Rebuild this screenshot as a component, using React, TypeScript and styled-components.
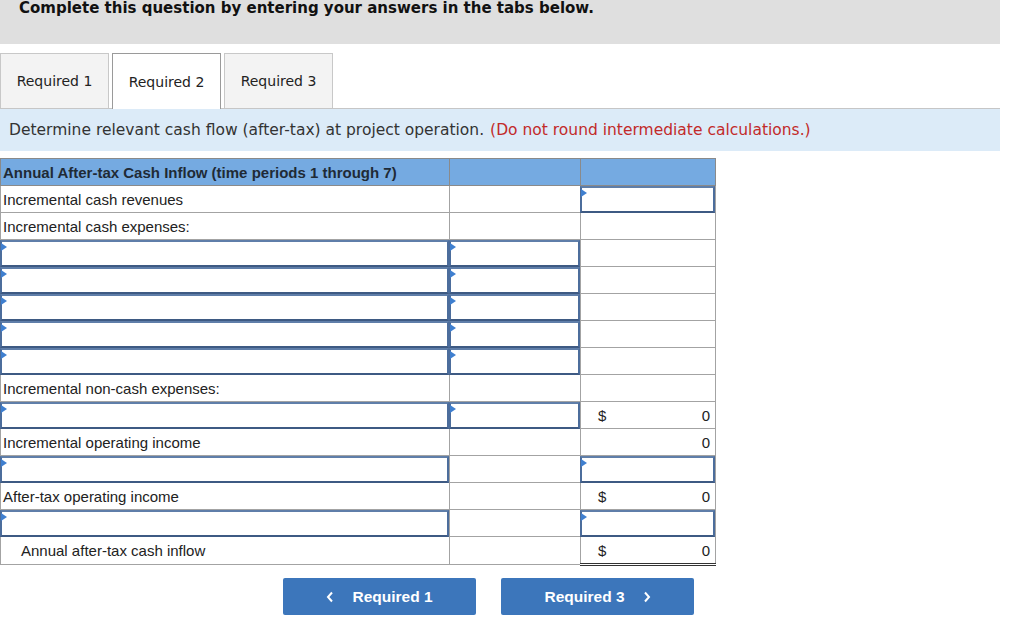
import React from "react";
import styled, { createGlobalStyle } from "styled-components";

const GlobalStyle = createGlobalStyle`
  body {
    margin: 0;
    background: #fff;
    font-family: "Liberation Sans", Arial, sans-serif;
  }
`;

const Page = styled.div`
  width: 1000px;
`;

const Banner = styled.div`
  height: 44px;
  background: #dfdfdf;
  padding: 0 0 0 19px;
  box-sizing: border-box;
  font-family: "DejaVu Sans", Verdana, sans-serif;
  font-weight: bold;
  font-size: 15px;
  line-height: 16px;
  color: #111;
`;

const TabBar = styled.div`
  display: flex;
  gap: 3px;
  margin-top: 9px;
  border-bottom: 1px solid #c6c6c6;
`;

const Tab = styled.div<{ $active?: boolean }>`
  width: 109px;
  box-sizing: border-box;
  display: flex;
  align-items: center;
  justify-content: center;
  background: ${(p) => (p.$active ? "#fff" : "#f3f3f3")};
  border: 1px solid ${(p) => (p.$active ? "#9a9a9a" : "#c8c8c8")};
  border-bottom: none;
  margin-bottom: ${(p) => (p.$active ? "-1px" : "0")};
  height: ${(p) => (p.$active ? "56px" : "55px")};
  font-family: "DejaVu Sans", Verdana, sans-serif;
  font-size: 14px;
  color: #222;
`;

const Instruction = styled.div`
  height: 42px;
  background: #dcebf8;
  display: flex;
  align-items: center;
  padding-left: 9px;
  font-family: "DejaVu Sans", Verdana, sans-serif;
  font-size: 15.5px;
  color: #333;
`;

const Red = styled.span`
  color: #c22a2a;
  margin-left: 6px;
`;

const Table = styled.table`
  margin-top: 7px;
  width: 715px;
  border-collapse: collapse;
  table-layout: fixed;
  font-size: 15px;
  color: #222;
`;

const HeadCell = styled.th`
  background: #75aae1;
  border: 1px solid #8a8a8a;
  height: 26px;
  padding: 0 2px;
  text-align: left;
  font-weight: bold;
  color: #1f2a36;
  white-space: nowrap;
`;

const Cell = styled.td<{ $indent?: boolean; $total?: boolean }>`
  border: 1px solid #a3a3a3;
  height: 26px;
  padding: 0 0 0 ${(p) => (p.$indent ? "20px" : "2px")};
  vertical-align: middle;
  white-space: nowrap;
  ${(p) => (p.$total ? "border-bottom: 3px double #333;" : "")}
`;

const InputCell = styled.td`
  border: 1px solid #a3a3a3;
  height: 26px;
  padding: 0;
`;

const InputBox = styled.div`
  position: relative;
  height: 27px;
  box-sizing: border-box;
  border: 2px solid #4c6d9c;
  border-top-color: #5f7ea9;
  border-bottom-color: #3e5a83;
  margin: -1px 0 -1px -1px;
  background: #fff;
  &::before {
    content: "";
    position: absolute;
    left: -1px;
    top: 1px;
    border-top: 4px solid transparent;
    border-bottom: 4px solid transparent;
    border-left: 6px solid #3f7fcf;
  }
`;

const Amount = styled.div`
  display: flex;
  justify-content: space-between;
  padding: 0 5px 0 15px;
`;

const Nav = styled.div`
  display: flex;
  gap: 25px;
  padding-left: 283px;
  margin-top: 12px;
`;

const NavButton = styled.button`
  width: 193px;
  height: 37px;
  border: none;
  border-radius: 2px;
  background: #3c76bb;
  color: #fff;
  font-family: "Liberation Sans", Arial, sans-serif;
  font-weight: bold;
  font-size: 15.5px;
  display: flex;
  align-items: center;
  justify-content: center;
  gap: 18px;
`;

const Chevron = ({ dir }: { dir: "left" | "right" }) => (
  <svg width="8" height="12" viewBox="0 0 8 12">
    <path
      d={dir === "left" ? "M6 1.5 L2 6 L6 10.5" : "M2 1.5 L6 6 L2 10.5"}
      fill="none"
      stroke="#fff"
      strokeWidth="2"
    />
  </svg>
);

type Row = {
  label?: string;
  indent?: boolean;
  c1?: boolean;
  c2?: boolean;
  c3?: boolean;
  value?: string;
  dollar?: boolean;
  total?: boolean;
};

const rows: Row[] = [
  { label: "Incremental cash revenues", c3: true },
  { label: "Incremental cash expenses:" },
  { c1: true, c2: true },
  { c1: true, c2: true },
  { c1: true, c2: true },
  { c1: true, c2: true },
  { c1: true, c2: true },
  { label: "Incremental non-cash expenses:" },
  { c1: true, c2: true, value: "0", dollar: true },
  { label: "Incremental operating income", value: "0" },
  { c1: true, c3: true },
  { label: "After-tax operating income", value: "0", dollar: true },
  { c1: true, c3: true },
  { label: "Annual after-tax cash inflow", indent: true, value: "0", dollar: true, total: true },
];

const App: React.FC = () => {
  return (
    <Page>
      <GlobalStyle />
      <Banner>Complete this question by entering your answers in the tabs below.</Banner>
      <TabBar>
        <Tab>Required 1</Tab>
        <Tab $active>Required 2</Tab>
        <Tab>Required 3</Tab>
      </TabBar>
      <Instruction>
        Determine relevant cash flow (after-tax) at project operation.
        <Red>(Do not round intermediate calculations.)</Red>
      </Instruction>
      <Table>
        <colgroup>
          <col style={{ width: 449 }} />
          <col style={{ width: 131 }} />
          <col style={{ width: 135 }} />
        </colgroup>
        <thead>
          <tr>
            <HeadCell>Annual After-tax Cash Inflow (time periods 1 through 7)</HeadCell>
            <HeadCell />
            <HeadCell />
          </tr>
        </thead>
        <tbody>
          {rows.map((r, i) => (
            <tr key={i}>
              {r.c1 ? (
                <InputCell>
                  <InputBox />
                </InputCell>
              ) : (
                <Cell $indent={r.indent}>{r.label}</Cell>
              )}
              {r.c2 ? (
                <InputCell>
                  <InputBox />
                </InputCell>
              ) : (
                <Cell />
              )}
              {r.c3 ? (
                <InputCell>
                  <InputBox />
                </InputCell>
              ) : (
                <Cell $total={r.total}>
                  {r.value && (
                    <Amount>
                      <span>{r.dollar ? "$" : ""}</span>
                      <span>{r.value}</span>
                    </Amount>
                  )}
                </Cell>
              )}
            </tr>
          ))}
        </tbody>
      </Table>
      <Nav>
        <NavButton>
          <Chevron dir="left" />
          Required 1
        </NavButton>
        <NavButton>
          Required 3
          <Chevron dir="right" />
        </NavButton>
      </Nav>
    </Page>
  );
};

export default App;
